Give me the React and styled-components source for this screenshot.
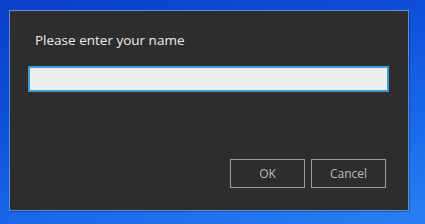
import React, { useState } from "react";
import styled, { createGlobalStyle } from "styled-components";

const GlobalStyle = createGlobalStyle`
  html, body {
    margin: 0;
    padding: 0;
  }
  body {
    font-family: "Open Sans", "Noto Sans", sans-serif;
  }
`;

const Desktop = styled.div`
  width: 425px;
  height: 224px;
  box-sizing: border-box;
  padding: 10px 0 0 9px;
  overflow: hidden;
  background: linear-gradient(
    165deg,
    #0a3fc6 0%,
    #0e4fd8 35%,
    #1a6aea 70%,
    #2a80f2 100%
  );
`;

const Dialog = styled.div`
  width: 400px;
  height: 201px;
  box-sizing: border-box;
  display: flex;
  flex-direction: column;
  padding: 20px 19px 22px 18px;
  background: #2d2d2d;
  border: 1px solid #5d8fd6;
  box-shadow: 1px 1px 0 rgba(0, 0, 0, 0.25);
`;

const Prompt = styled.div`
  padding-left: 7px;
  color: #ececec;
  font-size: 13.5px;
  line-height: 19px;
`;

const NameInput = styled.input`
  margin-top: 16px;
  height: 26px;
  box-sizing: border-box;
  width: 100%;
  border: 2px solid #3d9bd2;
  background: #eeeef0;
  outline: none;
  font-family: inherit;
  font-size: 13px;
  padding: 0 6px;
`;

const Footer = styled.div`
  margin-top: auto;
  display: flex;
  justify-content: flex-end;
  gap: 6px;
  padding-right: 3px;
`;

const Button = styled.button`
  width: 75px;
  height: 29px;
  box-sizing: border-box;
  background: transparent;
  border: 1px solid #9c9c9c;
  color: #bdbdbd;
  font-family: inherit;
  font-size: 12px;
  padding: 0;
  cursor: pointer;
`;

export default function App() {
  const [name, setName] = useState("");
  return (
    <>
      <GlobalStyle />
      <Desktop>
        <Dialog>
          <Prompt>Please enter your name</Prompt>
          <NameInput value={name} onChange={(e) => setName(e.target.value)} />
          <Footer>
            <Button>OK</Button>
            <Button>Cancel</Button>
          </Footer>
        </Dialog>
      </Desktop>
    </>
  );
}
